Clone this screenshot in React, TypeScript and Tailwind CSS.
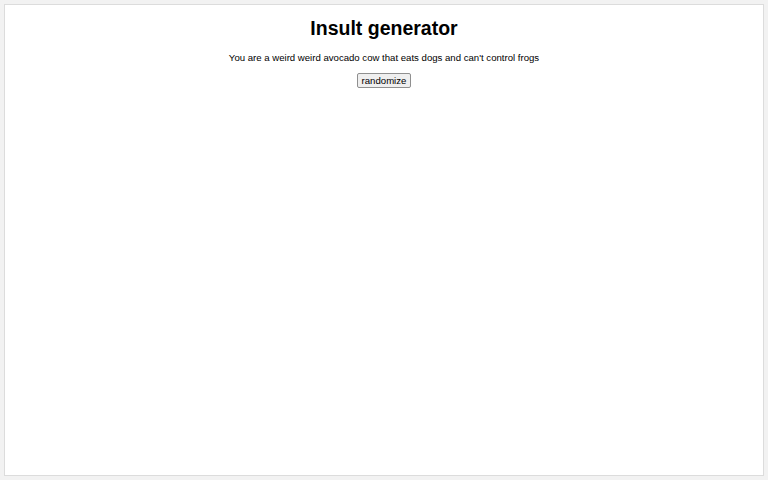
import { useState } from "react";

const adjectives = ["weird", "smelly", "soggy", "grumpy", "lumpy"];
const nouns = ["avocado cow", "potato goblin", "toaster", "sock puppet"];
const verbs = ["eats dogs", "licks rocks", "sniffs chairs", "hugs cactuses"];
const things = ["control frogs", "count spoons", "tie shoes", "whistle"];

const pick = (list: string[]) => list[Math.floor(Math.random() * list.length)];

const App = () => {
  const [insult, setInsult] = useState(
    "You are a weird weird avocado cow that eats dogs and can't control frogs",
  );

  const randomize = () => {
    setInsult(
      `You are a ${pick(adjectives)} ${pick(adjectives)} ${pick(nouns)} that ${pick(verbs)} and can't ${pick(things)}`,
    );
  };

  return (
    <div className="h-[480px] w-[768px] bg-[#f2f2f2] p-[4px] font-['Liberation_Sans',Arial,sans-serif]">
      <div className="flex h-[472px] flex-col items-center border border-[#dcdcdc] bg-white text-black">
        <h1 className="mt-[11px] text-[19.5px] leading-[24px] font-bold">Insult generator</h1>
        <p className="mt-[12px] text-[9.6px] leading-[12px]">{insult}</p>
        <button
          type="button"
          onClick={randomize}
          className="mt-[9px] h-[15px] rounded-[2px] border border-[#8f8f8f] bg-[#efefef] px-[4px] text-[9.6px] leading-[12px]"
        >
          randomize
        </button>
      </div>
    </div>
  );
};

export default App;
